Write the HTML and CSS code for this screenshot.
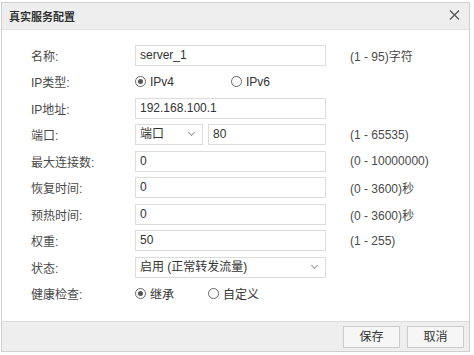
FILE: index.html
```html
<!DOCTYPE html>
<html lang="zh-CN">
<head>
  <meta charset="UTF-8">
  <title>真实服务配置</title>
  <link rel="stylesheet" href="styles.css">
</head>
<body>
  <div class="dialog">
    <!-- 标题栏 -->
    <div class="dialog-header">
      <span class="dialog-title">真实服务配置</span>
      <svg class="close-icon" width="11" height="10" viewBox="0 0 11 10">
        <path d="M1 0.5 L10 9.5 M10 0.5 L1 9.5" stroke="#555" stroke-width="1.3" fill="none"/>
      </svg>
    </div>

    <!-- 表单内容 -->
    <div class="dialog-body">
      <div class="form-row">
        <div class="form-label">名称:</div>
        <div class="form-control"><div class="text-input">server_1</div></div>
        <div class="form-hint">(1 - 95)字符</div>
      </div>
      <div class="form-row">
        <div class="form-label">IP类型:</div>
        <div class="form-control radio-group">
          <span class="radio checked"></span><span class="radio-text">IPv4</span>
          <span class="radio ipv6"></span><span class="radio-text">IPv6</span>
        </div>
      </div>
      <div class="form-row">
        <div class="form-label">IP地址:</div>
        <div class="form-control"><div class="text-input">192.168.100.1</div></div>
      </div>
      <div class="form-row">
        <div class="form-label">端口:</div>
        <div class="form-control port-control">
          <div class="select-input port-select">端口<span class="chevron"></span></div>
          <div class="text-input port-input">80</div>
        </div>
        <div class="form-hint">(1 - 65535)</div>
      </div>
      <div class="form-row">
        <div class="form-label">最大连接数:</div>
        <div class="form-control"><div class="text-input">0</div></div>
        <div class="form-hint">(0 - 10000000)</div>
      </div>
      <div class="form-row">
        <div class="form-label">恢复时间:</div>
        <div class="form-control"><div class="text-input">0</div></div>
        <div class="form-hint">(0 - 3600)秒</div>
      </div>
      <div class="form-row">
        <div class="form-label">预热时间:</div>
        <div class="form-control"><div class="text-input">0</div></div>
        <div class="form-hint">(0 - 3600)秒</div>
      </div>
      <div class="form-row">
        <div class="form-label">权重:</div>
        <div class="form-control"><div class="text-input">50</div></div>
        <div class="form-hint">(1 - 255)</div>
      </div>
      <div class="form-row">
        <div class="form-label">状态:</div>
        <div class="form-control"><div class="select-input">启用 (正常转发流量)<span class="chevron"></span></div></div>
      </div>
      <div class="form-row">
        <div class="form-label">健康检查:</div>
        <div class="form-control radio-group">
          <span class="radio checked"></span><span class="radio-text">继承</span>
          <span class="radio custom"></span><span class="radio-text">自定义</span>
        </div>
      </div>
    </div>

    <!-- 底部按钮 -->
    <div class="dialog-footer">
      <div class="btn">保存</div>
      <div class="btn">取消</div>
    </div>
  </div>
</body>
</html>
```
FILE: styles.css
```css
/* 全局样式 */
body {
  margin: 0;
  padding: 0;
  background-color: #ffffff;
  font-family: "Liberation Sans", "Noto Sans CJK SC", Arial, sans-serif;
  font-size: 12px;
  color: #333333;
}

/* 对话框 */
.dialog {
  margin: 2px 0 0 1px;
  width: 469px;
  height: 350px;
  border: 1px solid #cfcfcf;
  display: flex;
  flex-direction: column;
  box-sizing: border-box;
}

.dialog-header {
  height: 26px;
  background-color: #eeeeee;
  border-bottom: 1px solid #e2e2e2;
  display: flex;
  align-items: center;
  justify-content: space-between;
  padding: 0 7px 0 7px;
  flex-shrink: 0;
}

.dialog-title {
  font-size: 11px;
  font-weight: bold;
  color: #333333;
}

.close-icon {
  margin-right: 2px;
  margin-top: -2px;
}

/* 表单 */
.dialog-body {
  flex: 1;
  padding: 12px 0 0 29px;
}

.form-row {
  height: 26.5px;
  display: flex;
  align-items: center;
}

.form-label {
  width: 104px;
  color: #4a4a4a;
}

.form-control {
  width: 191px;
  display: flex;
  align-items: center;
}

.form-hint {
  margin-left: 24px;
  color: #4a4a4a;
}

.text-input,
.select-input {
  width: 100%;
  height: 21px;
  border: 1px solid #dcdcdc;
  box-sizing: border-box;
  padding: 0 4px;
  line-height: 19px;
  color: #333333;
  position: relative;
}

.chevron {
  position: absolute;
  right: 8px;
  top: 5px;
  width: 4px;
  height: 4px;
  border-right: 1px solid #999999;
  border-bottom: 1px solid #999999;
  transform: rotate(45deg);
}

.port-control {
  gap: 5px;
}

.port-select {
  width: 68px;
  flex-shrink: 0;
}

.port-input {
  flex: 1;
}

/* 单选框 */
.radio-group {
  height: 21px;
}

.radio {
  width: 11px;
  height: 11px;
  border: 1px solid #666666;
  border-radius: 50%;
  box-sizing: border-box;
  position: relative;
  flex-shrink: 0;
}

.radio.checked::after {
  content: "";
  position: absolute;
  left: 2px;
  top: 2px;
  width: 5px;
  height: 5px;
  border-radius: 50%;
  background-color: #555555;
}

.radio-text {
  margin-left: 4px;
}

.radio.ipv6 {
  margin-left: 57px;
}

.radio.custom {
  margin-left: 34px;
}

/* 底部 */
.dialog-footer {
  height: 29px;
  background-color: #eeeeee;
  border-top: 1px solid #dcdcdc;
  display: flex;
  justify-content: flex-end;
  align-items: center;
  gap: 7px;
  padding-right: 5px;
  flex-shrink: 0;
}

.btn {
  width: 57px;
  height: 22px;
  box-sizing: border-box;
  border: 1px solid #cccccc;
  background-color: #f6f6f6;
  text-align: center;
  line-height: 20px;
  font-size: 12px;
  color: #333333;
}
```
